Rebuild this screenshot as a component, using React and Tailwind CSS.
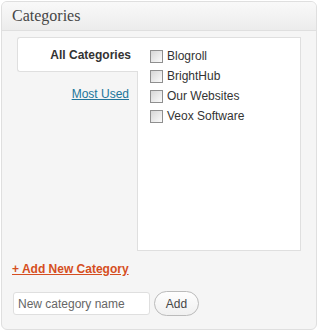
export default function App() {
  const cats = ["Blogroll", "BrightHub", "Our Websites", "Veox Software"]

  return (
    <div className="w-[320px] h-[332px] bg-white pt-px pl-px" style={{ fontFamily: '"Liberation Sans", Arial, sans-serif' }}>
      <div className="w-[316px] h-[329px] border border-[#dfdfdf] rounded-[6px] bg-[#f5f5f5] overflow-hidden">
        <div className="h-[29px] border-b border-[#dfdfdf] bg-gradient-to-b from-[#f9f9f9] to-[#ececec] flex items-center pl-[10px]">
          <h3 className="text-[16px] text-[#464646] leading-none" style={{ fontFamily: '"Liberation Serif", Georgia, serif' }}>
            Categories
          </h3>
        </div>

        <div className="pt-[6px] px-[15px]">
          <div className="flex h-[214px]">
            <div className="w-[120px] shrink-0">
              <div className="relative z-10 w-[121px] h-[35px] bg-white border-l border-t border-b border-[#dfdfdf] rounded-l-[3px] flex items-center justify-end pr-[7px]">
                <span className="text-[12px] font-bold text-[#333]">All Categories</span>
              </div>
              <div className="mt-[15px] text-right pr-[8px] text-[12px] leading-[15px]">
                <a href="#" className="text-[#21759b] underline">Most Used</a>
              </div>
            </div>
            <div className="w-[164px] h-[214px] bg-white border border-[#dfdfdf] pt-[8px] pl-[12px]">
              {cats.map((c) => (
                <label key={c} className="flex items-center h-[20px]">
                  <span className="w-[13px] h-[13px] border border-[#8f8f8f] bg-gradient-to-br from-[#d6d6d6] to-[#fbfbfb] shrink-0" />
                  <span className="ml-[4px] text-[12px] text-[#333]">{c}</span>
                </label>
              ))}
            </div>
          </div>
        </div>

        <div className="pl-[10px] mt-[11px] text-[12px] leading-[15px]">
          <a href="#" className="font-bold text-[#d54e21] underline">+ Add New Category</a>
        </div>

        <div className="flex items-center pl-[11px] mt-[14px]">
          <div className="w-[137px] h-[23px] bg-white border border-[#dfdfdf] rounded-[3px] flex items-center pl-[4px]">
            <span className="text-[12px] text-[#666]">New category name</span>
          </div>
          <button className="ml-[4px] w-[45px] h-[25px] rounded-full border border-[#bbb] bg-gradient-to-b from-[#fefefe] to-[#f0f0f0] text-[12px] text-[#464646]">
            Add
          </button>
        </div>
      </div>
    </div>
  )
}
